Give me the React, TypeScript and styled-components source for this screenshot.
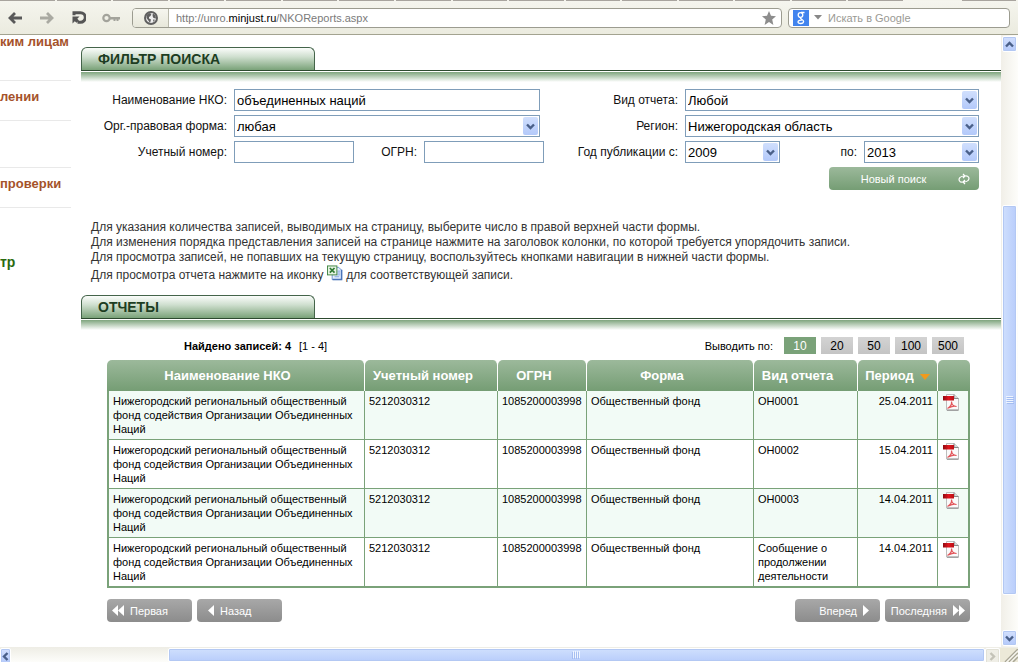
import React from "react";
import styled, { createGlobalStyle, css } from "styled-components";

const GlobalStyle = createGlobalStyle`
  *, *::before, *::after { box-sizing: border-box; }
  body { margin: 0; background: #fff; }
  body, button, input, select { font-family: "Liberation Sans", Arial, sans-serif; }
`;

const green = "#7aa279";
const greenFill = "linear-gradient(#9cb99b, #759d74)";

/* ---------- browser frame ---------- */

const Window = styled.div`
  display: flex;
  flex-direction: column;
  height: 100vh;
  overflow: hidden;
  font-size: 12px;
  color: #111;
`;

const TabEdge = styled.div`
  display: flex;
  height: 1px;
  flex: none;
  background: #f4f4ec;
`;

const TabBottom = styled.span<{ $active?: boolean }>`
  flex: 1;
  border-right: 2px solid #f4f4ec;
  background: ${(p) => (p.$active ? "#f4f4ec" : "#a8a49e")};
`;

const Toolbar = styled.header`
  display: flex;
  align-items: center;
  flex: none;
  height: 34px;
  padding: 0 8px 0 6px;
  background: linear-gradient(#f5f5ee, #ebebdf);
  border-bottom: 1px solid #a3a390;
`;

const ToolButton = styled.button`
  display: flex;
  align-items: center;
  justify-content: center;
  width: 18px;
  height: 20px;
  margin-right: 14px;
  padding: 0;
  border: 0;
  background: none;
`;

const AddressBar = styled.div`
  display: flex;
  align-items: center;
  flex: 1;
  height: 20px;
  margin-right: 6px;
  margin-left: -2px;
  border: 1px solid #9c9c90;
  border-radius: 4px;
  background: #fff;
  overflow: hidden;
`;

const SiteBadge = styled.span`
  display: flex;
  align-items: center;
  justify-content: center;
  align-self: stretch;
  width: 36px;
  border-right: 1px solid #b9b9ab;
  background: linear-gradient(#f6f6ef, #e8e8db);
`;

const Address = styled.span`
  flex: 1;
  padding-left: 7px;
  font-size: 11px;
  color: #7b7b7b;

  b { font-weight: normal; color: #000; }
`;

const StarButton = styled(ToolButton)`
  width: 16px;
  margin-right: 4px;
`;

const SearchBar = styled.div`
  display: flex;
  align-items: center;
  width: 222px;
  height: 20px;
  padding-left: 4px;
  border: 1px solid #9c9c90;
  border-radius: 4px;
  background: #fff;
`;

const SearchInput = styled.input`
  flex: 1;
  min-width: 0;
  padding: 0;
  border: 0;
  outline: 0;
  background: none;
  font-size: 11px;

  &::placeholder { color: #9a9a94; opacity: 1; }
`;

const EngineButton = styled.button`
  display: flex;
  align-items: center;
  gap: 5px;
  margin-right: 6px;
  padding: 0;
  border: 0;
  background: none;
`;

const Viewport = styled.div`
  display: flex;
  flex: 1;
  min-height: 0;
`;

const PageArea = styled.div`
  display: flex;
  flex: 1;
  min-width: 0;
  overflow: hidden;
`;

const VerticalBar = styled.div`
  display: flex;
  flex-direction: column;
  flex: none;
  width: 17px;
  padding: 1px;
  background: linear-gradient(90deg, #f1efe8, #fdfdfa);
`;

const HorizontalBar = styled.div`
  display: flex;
  flex: none;
  height: 15px;
  padding-top: 1px;
  background: linear-gradient(#eeede5, #fdfdfa);
  overflow: hidden;
`;

const barPart = css`
  display: flex;
  align-items: center;
  justify-content: center;
  padding: 0;
  border: 1px solid #fff;
  border-radius: 2px;
  box-shadow: inset 0 0 0 1px #b3c8f3;
`;

const BarButton = styled.button<{ $disabled?: boolean }>`
  ${barPart}
  flex: none;
  width: 15px;
  height: 16px;
  background: ${(p) => (p.$disabled ? "#efeee6" : "linear-gradient(#d3e0fd, #b4c9fa)")};
  ${(p) => p.$disabled && "box-shadow: inset 0 0 0 1px #e2e1d6;"}
`;

const LeftBarButton = styled(BarButton)`
  width: 11px;
`;

const Track = styled.span<{ $grow: number }>`
  flex: ${(p) => p.$grow} 1 0;
`;

const Thumb = styled.span<{ $grow: number; $vertical?: boolean }>`
  ${barPart}
  flex: ${(p) => p.$grow} 1 0;
  background: linear-gradient(${(p) => (p.$vertical ? "90deg, " : "")}#cfdffd, #b9cdfb);
`;

const SizeGrip = styled.span`
  display: flex;
  align-items: flex-end;
  justify-content: flex-end;
  flex: none;
  width: 18px;
  background: #ece9d8;
`;

/* ---------- sidebar ---------- */

const Sidebar = styled.nav`
  display: flex;
  flex-direction: column;
  flex: none;
  width: 71px;
  margin-right: 10px;
`;

const NavItem = styled.a<{ $height: number; $pad: number }>`
  height: ${(p) => p.$height}px;
  padding-top: ${(p) => p.$pad}px;
  border-bottom: 1px solid #e9e9e9;
  font-weight: bold;
  font-size: 13px;
  line-height: 14px;
  white-space: nowrap;
  color: #a5522a;
  text-decoration: none;
`;

const CenterLink = styled.a`
  margin-top: 46px;
  font-weight: bold;
  font-size: 14px;
  line-height: 16px;
  color: #2a6a10;
  text-decoration: none;
`;

/* ---------- page content ---------- */

const Main = styled.main`
  flex: 1;
  min-width: 0;
  padding-top: 12px;
`;

const SectionHead = styled.div`
  padding-bottom: 11px;
  background: linear-gradient(#7fa57e, #fff) bottom / 100% 10px no-repeat;
`;

const SectionLine = styled.div`
  height: 24px;
  border-bottom: 1px solid #2d4a2f;
`;

const SectionTitle = styled.h2`
  width: 234px;
  height: 23px;
  margin: 0;
  padding-left: 16px;
  border: 1px solid #44644a;
  border-bottom: 0;
  border-radius: 6px 6px 0 0;
  background: linear-gradient(#fbfdfb, #cfdfcf 40%, #7aa279);
  font-size: 14px;
  line-height: 22px;
  color: #1d3d22;
`;

const FilterForm = styled.form`
  display: flex;
  flex-direction: column;
  gap: 4px;
  padding: 7px 22px 0 0;
`;

const FormRow = styled.div`
  display: flex;
  justify-content: space-between;
`;

const Group = styled.div`
  display: flex;
  align-items: center;
  gap: 7px;
`;

const Label = styled.label<{ $width?: number }>`
  width: ${(p) => (p.$width ? `${p.$width}px` : "auto")};
  flex: ${(p) => (p.$width ? "none" : "1")};
  text-align: right;
  white-space: nowrap;
  font-size: 12px;
`;

const fieldBox = css<{ $width: number }>`
  width: ${(p) => p.$width}px;
  height: 22px;
  border: 1px solid #7f9db9;
  background: #fff;
`;

const TextField = styled.input<{ $width: number }>`
  ${fieldBox}
  padding: 0 2px;
  border-radius: 0;
  font-size: 13px;
`;

const Picker = styled.div<{ $width: number }>`
  ${fieldBox}
  position: relative;
  flex: none;

  select {
    appearance: none;
    width: 100%;
    height: 100%;
    padding: 0 18px 0 2px;
    border: 0;
    background: none;
    font-size: 13px;
    color: #000;
  }
`;

const PickerArrow = styled.span`
  position: absolute;
  top: 1px;
  right: 1px;
  bottom: 1px;
  display: flex;
  align-items: center;
  justify-content: center;
  width: 15px;
  border-radius: 2px;
  background: linear-gradient(#d0dffd, #b3c9fa);
  pointer-events: none;
`;

const RangeGroup = styled(Group)`
  width: 294px;
`;

const SearchButton = styled.button`
  display: flex;
  align-items: center;
  align-self: flex-end;
  width: 150px;
  height: 23px;
  padding: 0 9px 0 0;
  border: 0;
  border-radius: 4px;
  background: ${greenFill};
  font-size: 11px;
  color: #fff;

  span { flex: 1; }
`;

const Notes = styled.div`
  margin: 30px 22px 12px 10px;
  font-size: 12px;
  line-height: 15px;
  color: #333;

  p { margin: 0; }
  svg { vertical-align: -2px; }
`;

const Results = styled.section`
  padding: 7px 31px 0 26px;
`;

const ResultBar = styled.div`
  display: flex;
  align-items: center;
  justify-content: space-between;
  margin-bottom: 6px;
  padding: 0 6px 0 77px;
  font-size: 11px;
  color: #000;
`;

const Found = styled.span`
  display: flex;
  gap: 8px;
`;

const PageSizes = styled.div`
  display: flex;
  align-items: center;
  gap: 5px;
`;

const PageSizeLabel = styled.span`
  margin-right: 6px;
`;

const PageSize = styled.button<{ $active?: boolean }>`
  width: 32px;
  height: 17px;
  padding: 0;
  border: 0;
  background: ${(p) => (p.$active ? green : "linear-gradient(#d3d3d3, #c4c4c4)")};
  font-size: 12px;
  color: ${(p) => (p.$active ? "#fff" : "#000")};
`;

const Table = styled.table`
  width: 100%;
  table-layout: fixed;
  border-collapse: separate;
  border-spacing: 0;
  font-size: 11px;
  line-height: 14px;
  color: #000;
`;

const Th = styled.th<{ $sorted?: boolean }>`
  height: 31px;
  padding: 0 ${(p) => (p.$sorted ? 2 : 18)}px 0 2px;
  border-right: 1px solid #fff;
  border-radius: 5px 5px 0 0;
  background: ${greenFill};
  font-size: 13px;
  color: #fff;
  white-space: nowrap;

  &:last-child { border-right: 0; }
  svg { margin-left: 6px; }
`;

const Row = styled.tr<{ $tinted: boolean }>`
  background: ${(p) => (p.$tinted ? "#f2fbf6" : "#fff")};

  &:last-child td { border-bottom-width: 2px; }
`;

const Td = styled.td<{ $right?: boolean }>`
  height: 49px;
  padding: 3px 4px;
  border-right: 1px solid ${green};
  border-bottom: 1px solid ${green};
  vertical-align: top;
  text-align: ${(p) => (p.$right ? "right" : "left")};

  &:first-child { border-left: 2px solid ${green}; }
  &:last-child { border-right-width: 2px; }
`;

const ReportLink = styled.a`
  display: block;
  height: 18px;
`;

const Pager = styled.div`
  display: flex;
  gap: 5px;
  margin-top: 11px;
`;

const PagerButton = styled.button<{ $pushRight?: boolean; $end?: boolean }>`
  display: flex;
  align-items: center;
  justify-content: ${(p) => (p.$end ? "flex-end" : "flex-start")};
  gap: 6px;
  width: 85px;
  height: 23px;
  margin-left: ${(p) => (p.$pushRight ? "auto" : "0")};
  padding: 0 5px;
  border: 0;
  border-radius: 4px;
  background: linear-gradient(#a8a8a8, #8c8c8c);
  font-size: 11px;
  color: #fff;
`;

const Spaced = styled.span`
  display: flex;
  align-items: center;
  gap: 6px;
  padding: 0 6px;
`;

/* ---------- drawings ---------- */

const Arrow = ({ back }: { back?: boolean }) => (
  <svg width="14" height="12" viewBox="0 0 14 12" fill="none" stroke={back ? "#595959" : "#aaaaa2"} strokeWidth="2.8">
    {back ? <path d="M7 1 2 6l5 5M2 6h12" /> : <path d="m7 1 5 5-5 5M12 6H0" />}
  </svg>
);

const Reload = () => (
  <svg width="14" height="13" viewBox="0 0 14 13">
    <path d="M2 4.200V1.700h6.500a4.500 4.500 0 0 1 0 9.600H5.500" fill="none" stroke="#555" strokeWidth="3" />
    <path d="M.5 12.500v-7h7L5.300 7.800l1.700 1.700-2.500 2.300-1.700-1.500z" fill="#555" />
  </svg>
);

const Key = () => (
  <svg width="18" height="10" viewBox="0 0 18 10">
    <circle cx="4.500" cy="5" r="3.200" fill="none" stroke="#a3a39b" strokeWidth="2.200" />
    <path d="M8 4h10v2.500h-1.500V8h-2V6.500h-1V8h-2V6.500H8z" fill="#a3a39b" />
  </svg>
);

const Globe = () => (
  <svg width="14" height="14" viewBox="0 0 14 14">
    <circle cx="7" cy="7" r="6" fill="#eee" stroke="#606060" strokeWidth="2" />
    <path d="M2.500 4 5 2l2.500.8L6.500 5 5 6v1.500l2 1-.5 2L6 12 4 9 2.500 7zM9 2.500l2.500 2 .5 3-1.500-.3L9 6.500 8.500 4zM9 8.500l2 .2L9.500 11z" fill="#606060" />
  </svg>
);

const Star = () => (
  <svg width="14" height="14" viewBox="0 0 14 14">
    <path d="m7 0 2 4.800 5 .4-3.800 3.300L11.400 14 7 11l-4.400 3 1.200-5.500L0 5.200l5-.4z" fill="#8d8d8d" />
  </svg>
);

const GoogleMark = () => (
  <svg width="16" height="16" viewBox="0 0 16 16">
    <rect width="16" height="16" fill="#4284ee" />
    <g fill="none" stroke="#fff" strokeWidth="1.300">
      <ellipse cx="7.500" cy="5" rx="2.300" ry="2.400" />
      <path d="M8 2.500h3.500M8 7.500C6 8.500 10.800 9.500 10.600 11.500 10.400 14.200 5 14 5 12c0-1.800 3-2 4-1.800" />
    </g>
  </svg>
);

const Caret = () => (
  <svg width="8" height="5" viewBox="0 0 8 5">
    <path d="M0 0h8L4 4.500z" fill="#888" />
  </svg>
);

const turns = { down: 0, left: 90, up: 180, right: 270 };

const Chevron = ({ to = "down", color = "#4a6089" }: { to?: keyof typeof turns; color?: string }) => (
  <svg width="9" height="9" viewBox="0 0 9 9">
    <path d="m1 2.500 3.500 3.500L8 2.500" fill="none" stroke={color} strokeWidth="2.400" transform={`rotate(${turns[to]} 4.500 4.500)`} />
  </svg>
);

const ThumbLines = ({ vertical }: { vertical?: boolean }) => (
  <svg width="8" height="8" viewBox="0 0 8 8">
    <g transform={vertical ? "" : "rotate(90 4 4)"}>
      <path d="M0 .5h7m-7 2h7m-7 2h7m-7 2h7" stroke="#eef4ff" />
      <path d="M1 1.500h7m-7 2h7m-7 2h7m-7 2h7" stroke="#98b3ec" strokeOpacity=".7" />
    </g>
  </svg>
);

const Refresh = () => (
  <svg width="12" height="12" viewBox="0 0 12 12" fill="none" stroke="#fff" strokeWidth="1.200">
    <path d="M4.500 9.200C1.500 9.500 0 6.500 2 4.500 3 3.200 4.500 3 6.500 3M5 1l2 2-2 2M7.500 2.800C10.500 2.500 12 5.500 10 7.500 9 8.800 7.500 9 5.500 9M7 7 5 9l2 2" />
  </svg>
);

const ExcelIcon = () => (
  <svg width="16" height="16" viewBox="0 0 17 17">
    <path d="M5.500 2.500h7l3 3v10h-10z" fill="#e4eeff" stroke="#6f93d0" />
    <path d="M15.500 5v10.500H6" fill="none" stroke="#4a74b8" strokeWidth="1.600" />
    <path d="M8 12.500h5M11 6.500h3M11 8.500h3M11 10.500h3" stroke="#7fa3dd" />
    <rect x=".5" y="1" width="10" height="9.500" fill="#e6f3e2" stroke="#3f8440" />
    <path d="m3 3.200 5 5M8 3.200l-5 5" stroke="#2e7a32" strokeWidth="1.800" />
  </svg>
);

const PdfIcon = () => (
  <svg width="17" height="17" viewBox="0 0 17 17">
    <defs>
      <linearGradient id="pdf-band">
        <stop offset="0" stopColor="#8e0a10" />
        <stop offset=".5" stopColor="#e0161e" />
        <stop offset="1" stopColor="#b80f16" />
      </linearGradient>
    </defs>
    <path d="M4.500.5H12l4.500 4v11.500h-12z" fill="#fafafa" stroke="#bdbdbd" />
    <path d="M12 .5v4h4.500" fill="#d8d8d8" stroke="#888" />
    <path d="M5 16.200h11.500" stroke="#888" />
    <rect x="1" y="2" width="11" height="4.500" fill="url(#pdf-band)" />
    <path d="M9.500 7.500c.6 3-1.500 5.500-4 7M9.500 7.500c.2 3 2.500 5 5 5-2.500-.8-5.500.2-7.500 1.300" fill="none" stroke="#e2555a" strokeWidth="1.200" />
  </svg>
);

const SortMark = () => (
  <svg width="10" height="6" viewBox="0 0 10 6">
    <path d="M0 0h10L5 6z" fill="#f09a1c" />
  </svg>
);

const Triangles = ({ count, right }: { count: 1 | 2; right?: boolean }) => (
  <svg width={count * 6} height="11" viewBox={`0 0 ${count * 6} 11`} fill="#fff">
    {Array.from({ length: count }, (_, i) => (
      <path key={i} d={right ? `M${i * 6} 0l6 5.500-6 5.500z` : `M${i * 6 + 6} 0l-6 5.500 6 5.500z`} />
    ))}
  </svg>
);

const Grip = () => (
  <svg width="14" height="13" viewBox="0 0 14 13">
    <path d="M1 13 14 0M5 13l9-9M9 13l5-5" stroke="#a9a796" strokeWidth="1.500" />
    <path d="M2.500 13 14 1.500M6.500 13 14 5.500" stroke="#fff" />
  </svg>
);

/* ---------- data ---------- */

const organisation = "Нижегородский региональный общественный фонд содействия Организации Объединенных Наций";

const reports = [
  { kind: "ОН0001", date: "25.04.2011" },
  { kind: "ОН0002", date: "15.04.2011" },
  { kind: "ОН0003", date: "14.04.2011" },
  { kind: "Сообщение о продолжении деятельности", date: "14.04.2011" },
];

const columns = [258, 133, 89, undefined, 104, 80, 32];

const tabCount = 18;
const activeTab = 16;

const Select = ({ id, value, width }: { id: string; value: string; width: number }) => (
  <Picker $width={width}>
    <select id={id} defaultValue={value}>
      <option>{value}</option>
    </select>
    <PickerArrow><Chevron /></PickerArrow>
  </Picker>
);

const Section = ({ title }: { title: string }) => (
  <SectionHead>
    <SectionLine><SectionTitle>{title}</SectionTitle></SectionLine>
  </SectionHead>
);

export default function App() {
  return (
    <Window>
      <GlobalStyle />
      <TabEdge>
        {Array.from({ length: tabCount }, (_, i) => (
          <TabBottom key={i} $active={i === activeTab} />
        ))}
      </TabEdge>
      <Toolbar>
        <ToolButton aria-label="Назад"><Arrow back /></ToolButton>
        <ToolButton aria-label="Вперед"><Arrow /></ToolButton>
        <ToolButton aria-label="Обновить"><Reload /></ToolButton>
        <ToolButton aria-label="Пароли"><Key /></ToolButton>
        <AddressBar>
          <SiteBadge><Globe /></SiteBadge>
          <Address>http://unro.<b>minjust.ru</b>/NKOReports.aspx</Address>
          <StarButton aria-label="В закладки"><Star /></StarButton>
        </AddressBar>
        <SearchBar>
          <EngineButton aria-label="Google">
            <GoogleMark />
            <Caret />
          </EngineButton>
          <SearchInput aria-label="Искать в Google" placeholder="Искать в Google" />
        </SearchBar>
      </Toolbar>

      <Viewport>
        <PageArea>
          <Sidebar>
            <NavItem href="#" $height={46} $pad={0}>ким лицам</NavItem>
            <NavItem href="#" $height={40} $pad={9}>лении</NavItem>
            <NavItem href="#" $height={47} $pad={9} />
            <NavItem href="#" $height={40} $pad={9}>проверки</NavItem>
            <CenterLink href="#">тр</CenterLink>
          </Sidebar>

          <Main>
            <Section title="ФИЛЬТР ПОИСКА" />
            <FilterForm onSubmit={(e) => e.preventDefault()}>
              <FormRow>
                <Group>
                  <Label htmlFor="name" $width={146}>Наименование НКО:</Label>
                  <TextField id="name" $width={306} defaultValue="объединенных наций" />
                </Group>
                <Group>
                  <Label htmlFor="kind">Вид отчета:</Label>
                  <Select id="kind" value="Любой" width={294} />
                </Group>
              </FormRow>
              <FormRow>
                <Group>
                  <Label htmlFor="form" $width={146}>Орг.-правовая форма:</Label>
                  <Select id="form" value="любая" width={306} />
                </Group>
                <Group>
                  <Label htmlFor="region">Регион:</Label>
                  <Select id="region" value="Нижегородская область" width={294} />
                </Group>
              </FormRow>
              <FormRow>
                <Group>
                  <Label htmlFor="account" $width={146}>Учетный номер:</Label>
                  <TextField id="account" $width={120} />
                  <Label htmlFor="ogrn" $width={56}>ОГРН:</Label>
                  <TextField id="ogrn" $width={120} />
                </Group>
                <Group>
                  <Label htmlFor="from">Год публикации с:</Label>
                  <RangeGroup>
                    <Select id="from" value="2009" width={95} />
                    <Label htmlFor="to">по:</Label>
                    <Select id="to" value="2013" width={115} />
                  </RangeGroup>
                </Group>
              </FormRow>
              <SearchButton type="submit"><span>Новый поиск</span><Refresh /></SearchButton>
            </FilterForm>

            <Notes>
              <p>Для указания количества записей, выводимых на страницу, выберите число в правой верхней части формы.</p>
              <p>Для изменения порядка представления записей на странице нажмите на заголовок колонки, по которой требуется упорядочить записи.</p>
              <p>Для просмотра записей, не попавших на текущую страницу, воспользуйтесь кнопками навигации в нижней части формы.</p>
              <p>Для просмотра отчета нажмите на иконку <ExcelIcon /> для соответствующей записи.</p>
            </Notes>

            <Section title="ОТЧЕТЫ" />
            <Results>
              <ResultBar>
                <Found><b>Найдено записей: 4</b><span>[1 - 4]</span></Found>
                <PageSizes>
                  <PageSizeLabel>Выводить по:</PageSizeLabel>
                  {[10, 20, 50, 100, 500].map((n) => (
                    <PageSize key={n} $active={n === 10}>{n}</PageSize>
                  ))}
                </PageSizes>
              </ResultBar>
              <Table>
                <colgroup>
                  {columns.map((width, i) => <col key={i} width={width} />)}
                </colgroup>
                <thead>
                  <tr>
                    <Th>Наименование НКО</Th>
                    <Th>Учетный номер</Th>
                    <Th>ОГРН</Th>
                    <Th>Форма</Th>
                    <Th>Вид отчета</Th>
                    <Th $sorted>Период<SortMark /></Th>
                    <Th aria-label="Отчет" />
                  </tr>
                </thead>
                <tbody>
                  {reports.map((report, i) => (
                    <Row key={i} $tinted={i % 2 === 0}>
                      <Td>{organisation}</Td>
                      <Td>5212030312</Td>
                      <Td>1085200003998</Td>
                      <Td>Общественный фонд</Td>
                      <Td>{report.kind}</Td>
                      <Td $right>{report.date}</Td>
                      <Td><ReportLink href="#" aria-label="Открыть отчет"><PdfIcon /></ReportLink></Td>
                    </Row>
                  ))}
                </tbody>
              </Table>
              <Pager>
                <PagerButton><Triangles count={2} />Первая</PagerButton>
                <PagerButton><Spaced><Triangles count={1} />Назад</Spaced></PagerButton>
                <PagerButton $pushRight $end><Spaced>Вперед<Triangles count={1} right /></Spaced></PagerButton>
                <PagerButton $end>Последняя<Triangles count={2} right /></PagerButton>
              </Pager>
            </Results>
          </Main>
        </PageArea>
        <VerticalBar>
          <BarButton aria-label="Вверх"><Chevron to="up" /></BarButton>
          <Track $grow={154} />
          <Thumb $grow={390} $vertical><ThumbLines vertical /></Thumb>
          <Track $grow={35} />
          <BarButton aria-label="Вниз"><Chevron /></BarButton>
        </VerticalBar>
      </Viewport>
      <HorizontalBar>
        <LeftBarButton aria-label="Влево"><Chevron to="left" /></LeftBarButton>
        <Track $grow={157} />
        <Thumb $grow={816}><ThumbLines /></Thumb>
        <BarButton aria-label="Вправо" $disabled><Chevron to="right" color="#c4c3b8" /></BarButton>
        <SizeGrip><Grip /></SizeGrip>
      </HorizontalBar>
    </Window>
  );
}
